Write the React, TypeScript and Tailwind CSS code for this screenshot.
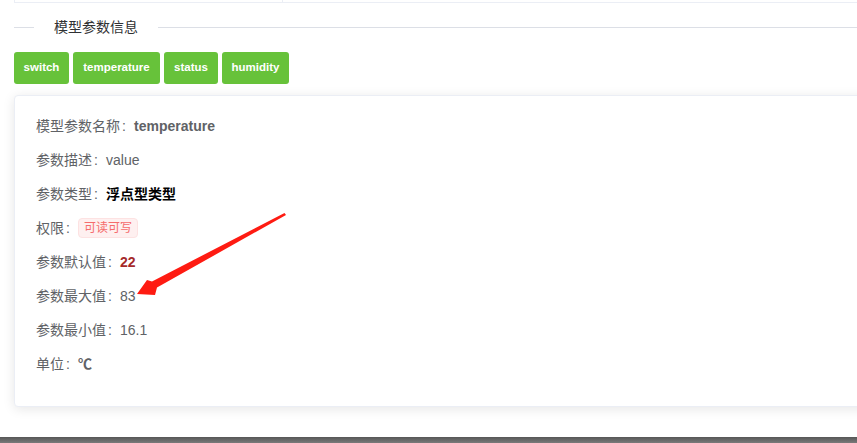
import React from 'react';

const params = ['switch', 'temperature', 'status', 'humidity'];
const btnWidth: Record<string, string> = {
  switch: 'w-[55px]',
  temperature: 'w-[87px]',
  status: 'w-[54px]',
  humidity: 'w-[67px]',
};

const Row = ({ label, children }: { label: string; children: React.ReactNode }) => (
  <div className="h-[34px] flex items-center text-[14px] text-[#606266]">
    <span>{label}</span>
    <span className="inline-block w-[14px] pl-[2px]">:</span>
    {children}
  </div>
);

export default function App() {
  return (
    <div
      className="relative w-[857px] h-[443px] overflow-hidden bg-white flex flex-col"
      style={{ fontFamily: '"Liberation Sans", "Noto Sans CJK SC", sans-serif' }}
    >
      {/* tail of the table above */}
      <div className="ml-[14px] h-[3px] shrink-0 flex border-l border-b border-[#ebeef5]">
        <div className="w-[268px] border-r border-[#ebeef5]" />
      </div>

      {/* divider */}
      <div className="mt-[14px] ml-[14px] h-5 shrink-0 flex items-center">
        <div className="w-5 h-px bg-[#dcdfe6]" />
        <span className="px-5 text-[14px] leading-5 text-[#303133]">模型参数信息</span>
        <div className="flex-1 h-px bg-[#dcdfe6]" />
      </div>

      {/* parameter buttons */}
      <div className="mt-[15px] ml-[14px] h-8 shrink-0 flex gap-1">
        {params.map((p) => (
          <button
            key={p}
            className={`${btnWidth[p]} h-8 flex items-center justify-center rounded-[3px] bg-[#67c23a] text-white text-[11.5px] font-bold`}
          >
            {p}
          </button>
        ))}
      </div>

      {/* detail card */}
      <div className="mt-[11px] ml-[14px] w-[870px] shrink-0 rounded-[4px] border border-[#ebeef5] bg-white shadow-[0_2px_12px_0_rgba(0,0,0,0.1)] pt-[13px] pb-[25px] px-[21px]">
        <Row label="模型参数名称">
          <span className="font-bold">temperature</span>
        </Row>
        <Row label="参数描述">
          <span>value</span>
        </Row>
        <Row label="参数类型">
          <span className="font-bold text-black">浮点型类型</span>
        </Row>
        <Row label="权限">
          <span className="inline-flex items-center h-5 px-[5px] rounded-[4px] border border-[#fde2e2] bg-[#fef0f0] text-[#f56c6c] text-[12px] leading-[19px]">
            可读可写
          </span>
        </Row>
        <Row label="参数默认值">
          <span className="font-bold text-[#a52a2a]">22</span>
        </Row>
        <Row label="参数最大值">
          <span>83</span>
        </Row>
        <Row label="参数最小值">
          <span>16.1</span>
        </Row>
        <Row label="单位">
          <span className="font-bold">℃</span>
        </Row>
      </div>

      {/* window edge */}
      <div className="mt-auto h-[6px] shrink-0 bg-[linear-gradient(#575757,#7a7a7a)]" />

      {/* annotation arrow */}
      <svg className="absolute inset-0 pointer-events-none" width="857" height="443" viewBox="0 0 857 443">
        <polygon
          points="137,294 147,280 152,281.5 284.5,213 286,215 157,287.5 155,295"
          fill="#fe1b12"
        />
      </svg>
    </div>
  );
}
